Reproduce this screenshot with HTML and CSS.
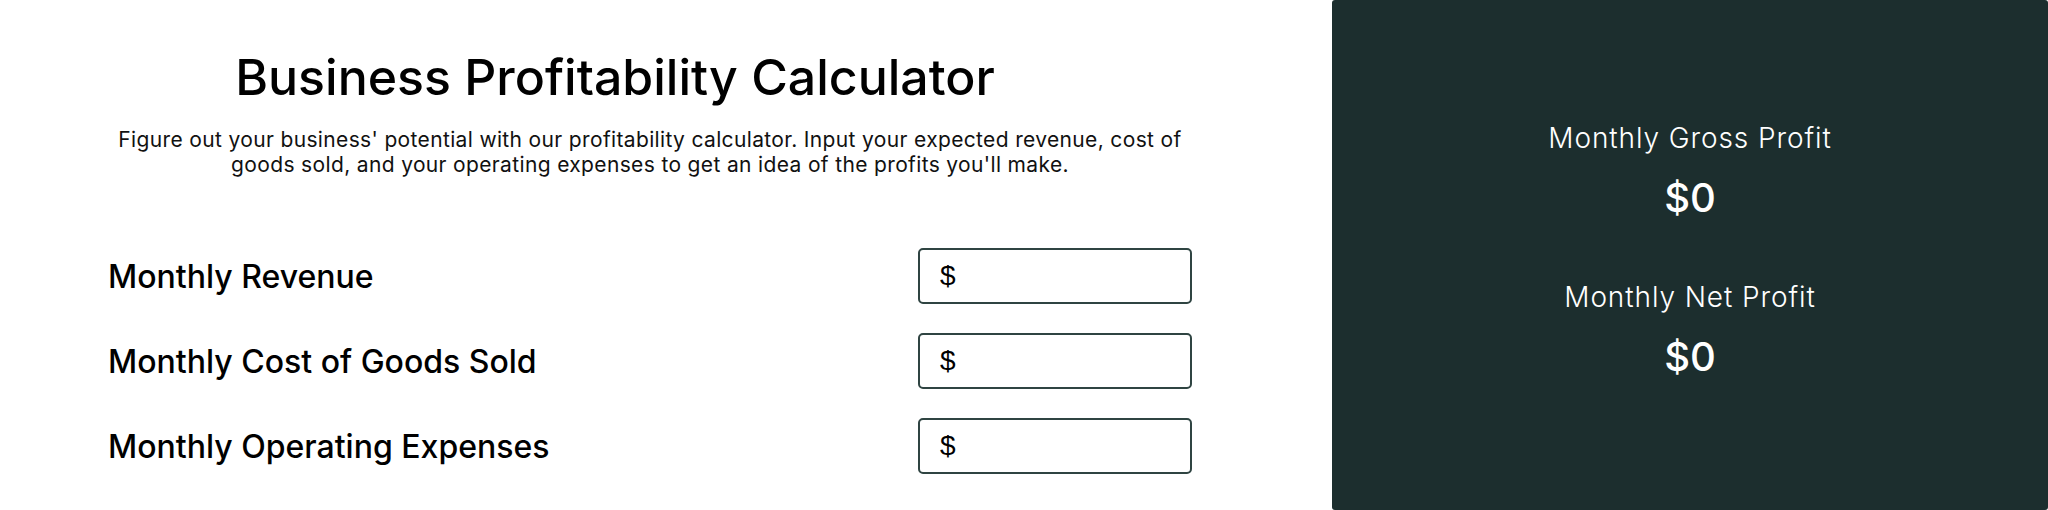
FILE: index.html
```html
<!DOCTYPE html>
<html lang="en">
<head>
    <meta charset="UTF-8">
    <meta name="viewport" content="width=device-width, initial-scale=1.0">
    <title>Business Profitability Calculator</title>
    <link rel="stylesheet" href="styles.css">
</head>
<body>
    <div class="calculator">
        <div class="calc-form">
            <h1>Business Profitability Calculator</h1>
            <p class="intro">Figure out your business' potential with our profitability calculator. Input your expected revenue, cost of goods sold, and your operating expenses to get an idea of the profits you'll make.</p>

            <div class="fields">
                <div class="field-row">
                    <label for="revenue">Monthly Revenue</label>
                    <div class="money-input">
                        <span class="currency">$</span>
                        <input type="text" id="revenue">
                    </div>
                </div>
                <div class="field-row">
                    <label for="cogs">Monthly Cost of Goods Sold</label>
                    <div class="money-input">
                        <span class="currency">$</span>
                        <input type="text" id="cogs">
                    </div>
                </div>
                <div class="field-row">
                    <label for="opex">Monthly Operating Expenses</label>
                    <div class="money-input">
                        <span class="currency">$</span>
                        <input type="text" id="opex">
                    </div>
                </div>
            </div>
        </div>

        <div class="results">
            <div class="result">
                <div class="result-label">Monthly Gross Profit</div>
                <div class="result-value" id="gross">$0</div>
            </div>
            <div class="result">
                <div class="result-label">Monthly Net Profit</div>
                <div class="result-value" id="net">$0</div>
            </div>
        </div>
    </div>
</body>
</html>
```

FILE: styles.css
```css
:root {
    --panel-bg: #1c2e2e;
    --text-color: #000;
    --border-color: #2f4442;
}

* {
    box-sizing: border-box;
}

body {
    margin: 0;
    font-family: 'Inter', 'Liberation Sans', sans-serif;
    color: var(--text-color);
    background: #fff;
}

.calculator {
    display: flex;
    height: 510px;
}

.calc-form {
    flex: 1;
    padding: 47px 140px 0 108px;
}

h1 {
    margin: 0 70px 0 0;
    font-size: 50px;
    line-height: 60px;
    font-weight: 500;
    text-align: center;
}

.intro {
    margin: 20px auto 0;
    max-width: 1080px;
    font-size: 21px;
    line-height: 25px;
    font-weight: 400;
    letter-spacing: 0.35px;
    color: #111;
    text-align: center;
}

.fields {
    display: flex;
    flex-direction: column;
    gap: 29px;
    margin-top: 71px;
}

.field-row {
    display: flex;
    align-items: center;
    justify-content: space-between;
}

.field-row label {
    font-size: 32px;
    font-weight: 500;
}

.money-input {
    display: flex;
    align-items: center;
    width: 274px;
    height: 56px;
    padding: 0 20px;
    border: 2px solid var(--border-color);
    border-radius: 5px;
}

.currency {
    font-family: 'Liberation Sans', sans-serif;
    font-size: 28px;
}

.money-input input {
    flex: 1;
    min-width: 0;
    border: none;
    outline: none;
    font: inherit;
    font-size: 26px;
    background: transparent;
}

.results {
    width: 716px;
    background-color: var(--panel-bg);
    color: #fff;
    border-radius: 3px;
    display: flex;
    flex-direction: column;
    justify-content: center;
    align-items: center;
    gap: 59px;
    padding-bottom: 8px;
    text-align: center;
}

.result-label {
    font-size: 28px;
    line-height: 32px;
    font-weight: 300;
    letter-spacing: 0.9px;
}

.result-value {
    margin-top: 20px;
    font-size: 40px;
    line-height: 48px;
    font-weight: 500;
}
```
